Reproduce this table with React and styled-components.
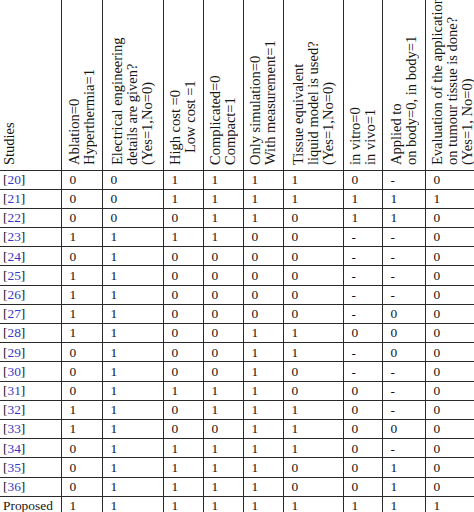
import React from 'react';
import styled, { createGlobalStyle } from 'styled-components';

const GlobalStyle = createGlobalStyle`
  html, body {
    margin: 0;
    padding: 0;
    background: #ffffff;
  }
  body {
    font-family: "Liberation Serif", "Times New Roman", serif;
    color: #151515;
  }
`;

const criteria = [
  { width: 41, lines: [{ text: 'Ablation=0' }, { text: 'Hyperthermia=1' }] },
  {
    width: 61,
    lines: [
      { text: 'Electrical engineering' },
      { text: 'details are given?' },
      { text: '(Yes=1,No=0)' },
    ],
  },
  { width: 40, lines: [{ text: 'High cost =0' }, { text: 'Low cost =1', indent: 12 }] },
  { width: 40, lines: [{ text: 'Complicated=0' }, { text: 'Compact=1' }] },
  { width: 40, lines: [{ text: 'Only simulation=0' }, { text: 'With measurement=1' }] },
  {
    width: 60,
    lines: [
      { text: 'Tissue equivalent' },
      { text: 'liquid model is used?' },
      { text: '(Yes=1,No=0)' },
    ],
  },
  { width: 39, lines: [{ text: 'in vitro=0' }, { text: 'in vivo=1' }] },
  { width: 43, lines: [{ text: 'Applied to' }, { text: 'on body=0, in body=1' }] },
  {
    width: 54,
    lines: [
      { text: 'Evaluation of the application' },
      { text: 'on tumour tissue is done?' },
      { text: '(Yes=1, No=0)' },
    ],
  },
];

const studies = [
  { ref: '20', values: '0 0 1 1 1 1 0 - 0' },
  { ref: '21', values: '0 0 1 1 1 1 1 1 1' },
  { ref: '22', values: '0 0 0 1 1 0 1 1 0' },
  { ref: '23', values: '1 1 1 1 0 0 - - 0' },
  { ref: '24', values: '0 1 0 0 0 0 - - 0' },
  { ref: '25', values: '1 1 0 0 0 0 - - 0' },
  { ref: '26', values: '1 1 0 0 0 0 - - 0' },
  { ref: '27', values: '1 1 0 0 0 0 - 0 0' },
  { ref: '28', values: '1 1 0 0 1 1 0 0 0' },
  { ref: '29', values: '0 1 0 0 1 1 - 0 0' },
  { ref: '30', values: '0 1 0 0 1 0 - - 0' },
  { ref: '31', values: '0 1 1 1 1 0 0 - 0' },
  { ref: '32', values: '1 1 0 1 1 1 0 - 0' },
  { ref: '33', values: '1 1 0 0 1 1 0 0 0' },
  { ref: '34', values: '0 1 1 1 1 1 0 - 0' },
  { ref: '35', values: '0 1 1 1 1 0 0 1 0' },
  { ref: '36', values: '0 1 1 1 1 0 0 1 0' },
  { label: 'Proposed', values: '1 1 1 1 1 1 1 1 1' },
];

const App = () => {
  return (
    <Page>
      <GlobalStyle />
      <Table>
        <colgroup>
          <col style={{ width: 61 }} />
          {criteria.map((c, i) => (
            <col key={i} style={{ width: c.width }} />
          ))}
        </colgroup>
        <thead>
          <HeadRow>
            <StudiesHead>
              <Rotated>
                <Line>Studies</Line>
              </Rotated>
            </StudiesHead>
            {criteria.map((c, i) => (
              <HeadCell key={i}>
                <Rotated>
                  {c.lines.map((l, j) => (
                    <Line key={j} $indent={l.indent}>
                      {l.text}
                    </Line>
                  ))}
                </Rotated>
              </HeadCell>
            ))}
          </HeadRow>
        </thead>
        <tbody>
          {studies.map((s, i) => (
            <Row key={i}>
              <StudyCell>
                {s.label ? (
                  s.label
                ) : (
                  <>
                    [<Cite>{s.ref}</Cite>]
                  </>
                )}
              </StudyCell>
              {s.values.split(' ').map((v, j) => (
                <Cell key={j}>{v}</Cell>
              ))}
            </Row>
          ))}
        </tbody>
      </Table>
    </Page>
  );
};

const Page = styled.div`
  width: 474px;
  height: 512px;
  overflow: hidden;
`;

const Table = styled.table`
  border-collapse: collapse;
  table-layout: fixed;
  width: 479px;
  font-family: "Liberation Serif", "Times New Roman", serif;
  color: #151515;
`;

const HeadRow = styled.tr`
  height: 170px;
`;

const HeadCell = styled.th`
  padding: 0 0 5px 0;
  border-right: 1px solid #2a2a2a;
  border-bottom: 1px solid #2a2a2a;
  vertical-align: bottom;
  text-align: center;
  font-weight: normal;
  font-family: "Liberation Serif", "Times New Roman", serif;
`;

const StudiesHead = styled(HeadCell)`
  text-align: left;
  padding-left: 2px;
`;

const Rotated = styled.div`
  display: inline-block;
  writing-mode: vertical-rl;
  transform: rotate(180deg);
  height: 160px;
  text-align: start;
  font-size: 14.5px;
  line-height: 15px;
  white-space: nowrap;
  vertical-align: bottom;
`;

const Line = styled.span`
  display: block;
  padding-inline-start: ${(p) => (p.$indent ? `${p.$indent}px` : '0')};
`;

const Row = styled.tr`
  height: 19.2px;
`;

const Cell = styled.td`
  padding: 0 0 0 8px;
  border-right: 1px solid #2a2a2a;
  border-bottom: 1px solid #2a2a2a;
  font-family: "Liberation Serif", "Times New Roman", serif;
  font-size: 13.4px;
  line-height: 1;
  vertical-align: middle;
  text-align: left;
`;

const StudyCell = styled(Cell)`
  padding-left: 3px;
`;

const Cite = styled.span`
  color: #3636c8;
`;

export default App;
